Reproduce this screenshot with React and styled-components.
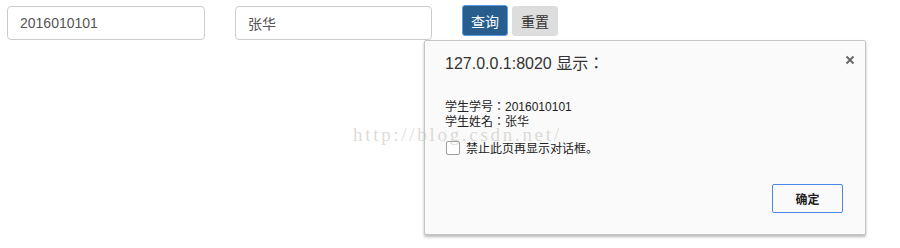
import React from "react";
import styled, { createGlobalStyle } from "styled-components";

const Global = createGlobalStyle`
  html, body { margin: 0; padding: 0; background: #fff; }
  body { font-family: "Liberation Sans", "Noto Sans CJK JP", sans-serif; }
  * { box-sizing: border-box; }
`;

const Page = styled.div`
  position: relative;
  width: 900px;
  height: 248px;
  overflow: hidden;
`;

const Toolbar = styled.div`
  display: flex;
  align-items: flex-start;
  padding: 5px 0 0 7px;
`;

const Field = styled.div`
  width: ${(p) => p.$w}px;
  height: 34px;
  margin-top: 1px;
  margin-right: 30px;
  border: 1px solid #ccc;
  border-radius: 4px;
  padding: 0 12px;
  display: flex;
  align-items: center;
  font-size: 14px;
  color: #555;
  font-family: "Liberation Sans", "Noto Sans CJK SC", sans-serif;
`;

const Buttons = styled.div`
  display: flex;
  gap: 4px;
`;

const Btn = styled.div`
  width: 46px;
  height: ${(p) => (p.$primary ? 31 : 30)}px;
  margin-top: ${(p) => (p.$primary ? 0 : 1)}px;
  border-radius: 3px;
  display: flex;
  align-items: center;
  justify-content: center;
  font-size: 14px;
  font-family: "Noto Sans CJK SC", sans-serif;
  color: ${(p) => (p.$primary ? "#fff" : "#333")};
  background: ${(p) => (p.$primary ? "#285e8e" : "#dddddd")};
  border: 1px solid ${(p) => (p.$primary ? "#5d9be0" : "#dcdcdc")};
`;

const Dialog = styled.div`
  position: absolute;
  left: 424px;
  top: 40px;
  width: 442px;
  height: 195px;
  background: #fafafa;
  border: 1px solid #c6c6c6;
  border-radius: 2px;
  box-shadow: 0 2px 3px rgba(0, 0, 0, 0.28);
  padding: 11px 22px 21px 20px;
  display: flex;
  flex-direction: column;
`;

const TitleRow = styled.div`
  display: flex;
  justify-content: space-between;
  align-items: flex-start;
`;

const Title = styled.div`
  margin-top: 1px;
  font-size: 16px;
  line-height: 22px;
  color: #333;
  font-family: "Liberation Sans", "Noto Sans CJK JP", sans-serif;
`;

const Close = styled.svg`
  margin-top: 3px;
  margin-right: -12px;
`;

const Message = styled.div`
  margin-top: 25px;
  font-size: 12px;
  line-height: 15px;
  color: #222;
  font-family: "Liberation Sans", "Noto Sans CJK JP", sans-serif;
`;

const CheckRow = styled.label`
  margin-top: 9px;
  display: flex;
  align-items: center;
  gap: 6px;
  font-size: 12px;
  color: #222;
  font-family: "Noto Sans CJK SC", sans-serif;
`;

const Box = styled.span`
  width: 14px;
  height: 14px;
  border: 1px solid #a0a0a0;
  border-radius: 2px;
  background: #fff;
  margin-left: 1px;
`;

const Footer = styled.div`
  margin-top: auto;
  display: flex;
  justify-content: flex-end;
`;

const OkButton = styled.div`
  width: 71px;
  height: 29px;
  border: 1px solid #4a86e8;
  border-radius: 2px;
  background: #fafafa;
  display: flex;
  align-items: center;
  justify-content: center;
  font-size: 12px;
  font-weight: bold;
  color: #222;
  font-family: "Noto Sans CJK SC", sans-serif;
`;

const Watermark = styled.div`
  position: absolute;
  left: 353px;
  top: 124px;
  font-family: "Liberation Serif", serif;
  font-size: 19px;
  letter-spacing: 2.7px;
  color: rgba(190, 190, 180, 0.55);
  pointer-events: none;
  white-space: nowrap;
`;

export default function App() {
  return (
    <Page>
      <Global />
      <Toolbar>
        <Field $w={198}>2016010101</Field>
        <Field $w={197}>张华</Field>
        <Buttons>
          <Btn $primary>查询</Btn>
          <Btn>重置</Btn>
        </Buttons>
      </Toolbar>
      <Dialog>
        <TitleRow>
          <Title>127.0.0.1:8020 显示：</Title>
          <Close width="10" height="10" viewBox="0 0 10 10">
            <path d="M1.5 1.5 L8.5 8.5 M8.5 1.5 L1.5 8.5" stroke="#6a6a6a" strokeWidth="2" />
          </Close>
        </TitleRow>
        <Message>
          学生学号：2016010101
          <br />
          学生姓名：张华
        </Message>
        <CheckRow>
          <Box />
          禁止此页再显示对话框。
        </CheckRow>
        <Footer>
          <OkButton>确定</OkButton>
        </Footer>
      </Dialog>
      <Watermark>http://blog.csdn.net/</Watermark>
    </Page>
  );
}
